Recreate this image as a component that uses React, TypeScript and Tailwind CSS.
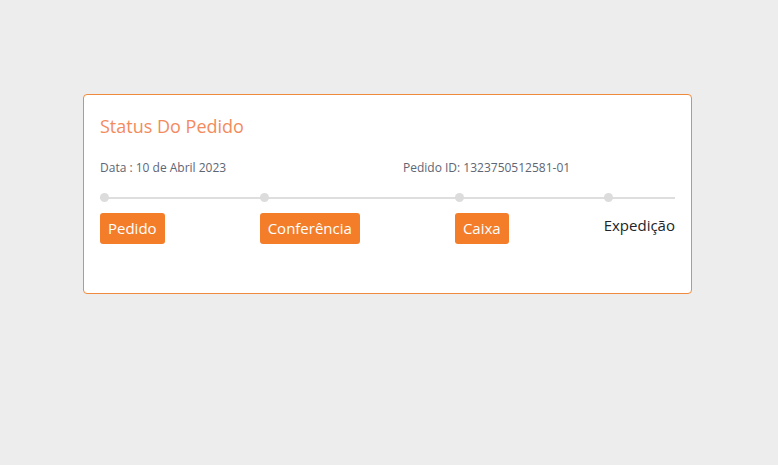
import React from "react";

const steps = [
  { label: "Pedido", done: true },
  { label: "Conferência", done: true },
  { label: "Caixa", done: true },
  { label: "Expedição", done: false },
];

export default function App() {
  return (
    <div
      className="min-h-[465px] w-full bg-[#ededed] pt-[94px] pl-[83px]"
      style={{ fontFamily: '"Open Sans", "Noto Sans", sans-serif' }}
    >
      <div className="w-[609px] h-[200px] rounded-[4px] border border-[#f08a3c] bg-white px-4 pt-[17px]">
        <h2 className="text-[18px] leading-[28px] text-[#f38b5d]">Status Do Pedido</h2>

        <div className="mt-[19px] flex text-[12px] leading-[18px] text-[#5e6573]">
          <p className="w-[303px]">Data : 10 de Abril 2023</p>
          <p>Pedido ID: 1323750512581-01</p>
        </div>

        <div className="relative mt-[16px]">
          <div className="absolute left-0 right-0 top-[4px] h-[2px] bg-[#dedede]" />
          <div className="relative flex justify-between">
            {steps.map((s) => (
              <div key={s.label} className="flex flex-col items-start">
                <span className="h-[9px] w-[9px] rounded-full bg-[#dcdcdc]" />
                {s.done ? (
                  <span className="mt-[11px] rounded-[3px] bg-[#f37d29] px-[8px] h-[31px] flex items-center text-[15px] text-white">
                    {s.label}
                  </span>
                ) : (
                  <span className="mt-[11px] h-[24px] flex items-center text-[15px] text-[#212529]">
                    {s.label}
                  </span>
                )}
              </div>
            ))}
          </div>
        </div>
      </div>
    </div>
  );
}
